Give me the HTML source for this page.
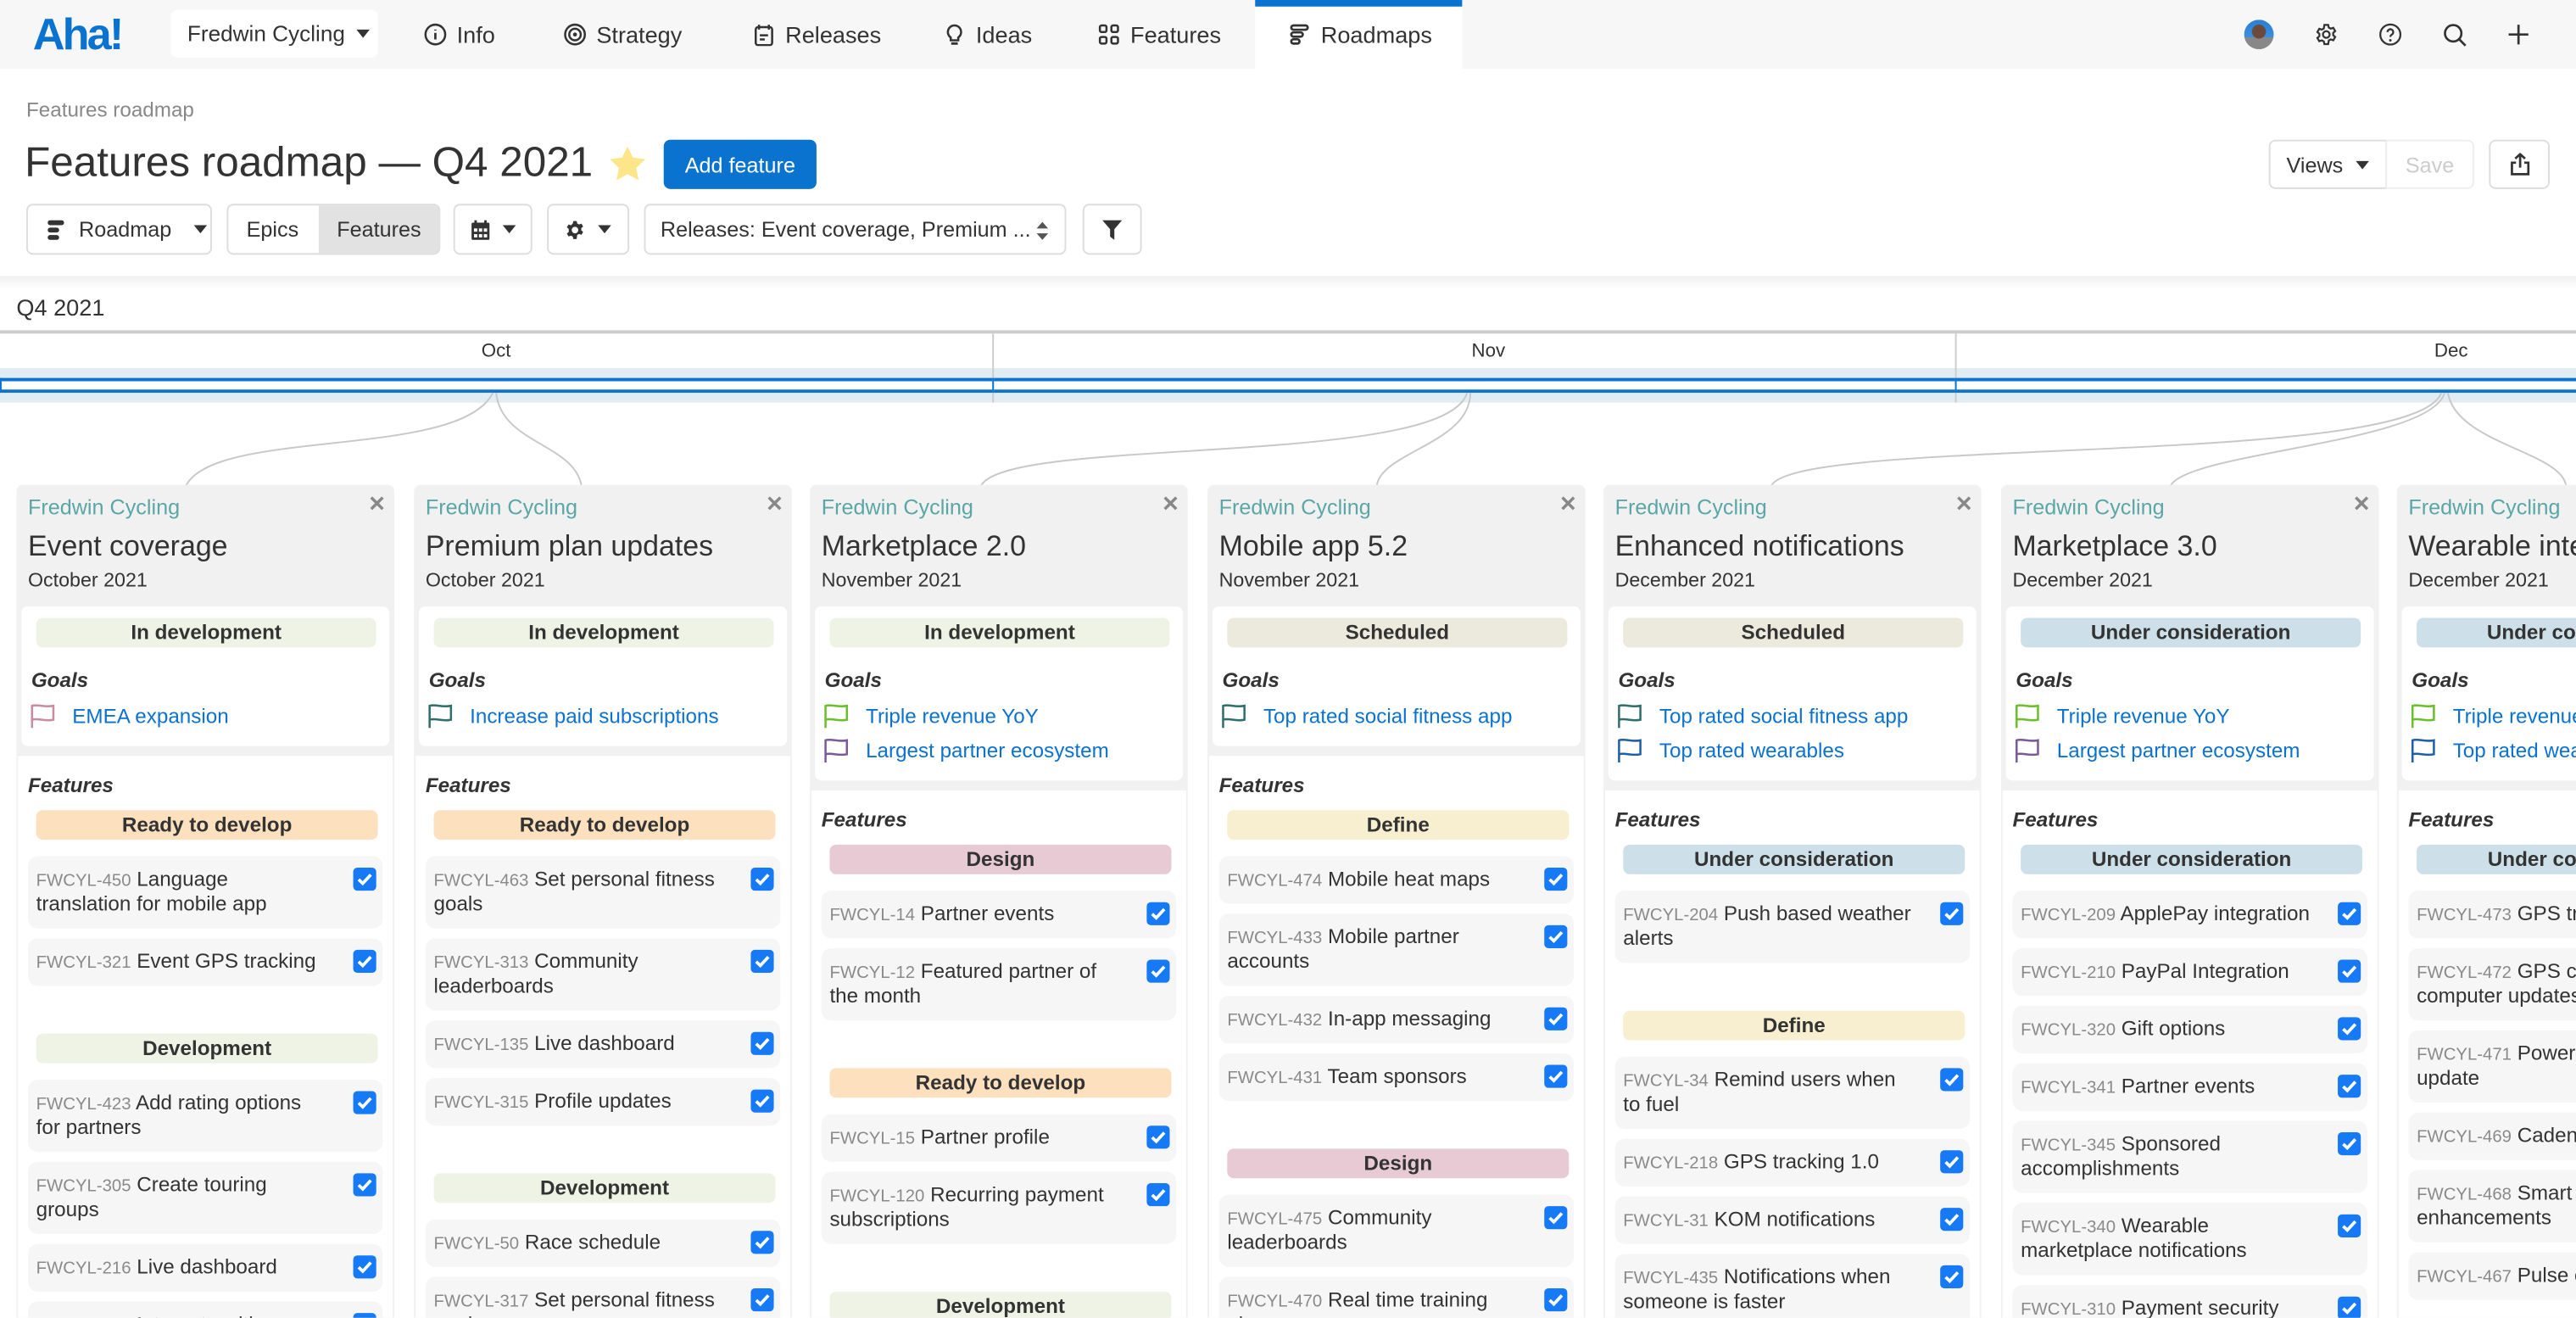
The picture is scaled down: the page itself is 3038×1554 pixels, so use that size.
<!DOCTYPE html>
<html><head><meta charset="utf-8">
<style>
*{box-sizing:border-box;margin:0;padding:0}
html,body{width:3038px;height:1554px;overflow:hidden;background:#fff}
#s{position:absolute;left:0;top:0;width:1568px;height:802px;transform:scale(1.9375);transform-origin:0 0;overflow:hidden;font-family:"Liberation Sans",Arial,sans-serif;color:#333;background:#fff}
.a{position:absolute}
.nav{left:0;top:0;width:1568px;height:42px;background:#f7f7f7}
.ni{position:absolute;top:0;height:42px;display:flex;align-items:center;font-size:14px;color:#333;gap:6px}
.ni svg{width:14px;height:14px}
.btn{position:absolute;border:1px solid #ddd;border-radius:4px;background:#fff;display:flex;align-items:center;justify-content:center;font-size:13px;color:#333;gap:8px}
.tri{width:0;height:0;border-left:4px solid transparent;border-right:4px solid transparent;border-top:5px solid #333}
.card{position:absolute;top:295px;width:230px;height:507px;background:#f1f1f1;border-radius:4px 4px 0 0;overflow:hidden}
.hd{padding:6px 0 0 7px}
.org{font-size:13px;line-height:16px;color:#5ba6a6}
.ttl{font-size:17.5px;line-height:22px;margin-top:4px;color:#333;white-space:nowrap}
.dt{font-size:12px;line-height:16px;margin-top:2px;color:#333}
.x{position:absolute;right:5px;top:4px;font-size:13px;color:#888;font-weight:bold}
.gb{margin:8px 3px 0 3px;background:#fff;border-radius:4px;padding:7px 8px 7.5px 9px}
.pill{height:18px;border-radius:4px;font-size:12.5px;font-weight:bold;line-height:18px;text-align:center;color:#333;white-space:nowrap;overflow:hidden}
.lbl{font-size:12.5px;font-weight:bold;font-style:italic;line-height:16px;color:#333}
.gb .lbl{margin-top:12px;margin-left:-3px;margin-bottom:3px}
.goal{height:21px;display:flex;align-items:center;font-size:12.5px;color:#0b72d0;white-space:nowrap;margin-left:-4px}
.goal svg{width:16px;height:15px;margin-right:10px;flex:none}
.fs{margin:6px 1px 0 1px;background:#fff;padding:10px 6px 0 6px;height:420px}
.fs>.lbl{margin-left:0}
.fs .pill{margin:0 3px 0 5px}
.fs .pill.first{margin-top:7px}
.fs .pill.next{margin-top:29px}
.it{position:relative;background:#f6f6f6;border-radius:6px;padding:7px 24px 7px 5px;font-size:12.5px;line-height:15px;color:#333;white-space:nowrap;margin-top:6px}
.pill+.it{margin-top:10px}
.id{font-size:10.5px;color:#8a8a8a;line-height:1}
.cb{position:absolute;right:4px;top:7px;width:14px;height:14px;border-radius:2.5px;background:#1679f5}
.cb svg{position:absolute;left:2px;top:2px;width:10px;height:10px}
.g1{background:#eff3e6}.rd{background:#fde1bf}.sc{background:#ece9dd}.uc{background:#cde0e9}.ds{background:#e8cad5}.df{background:#f7efcf}
</style></head><body><div id="s">

<div class="a nav"></div>
<div class="a" style="left:20px;top:4px;font-size:27px;font-weight:bold;color:#0a73cf;letter-spacing:-1.5px;line-height:34px">Aha!</div>
<div class="a" style="left:104px;top:6px;width:126px;height:29px;background:#fff;border-radius:4px;display:flex;align-items:center;padding-left:10px;gap:7px;font-size:13.5px">Fredwin Cycling <span class="tri"></span></div>

<div class="ni" style="left:258px"><svg viewBox="0 0 14 14"><circle cx="7" cy="7" r="6" fill="none" stroke="#333" stroke-width="1.3"/><path d="M7 6v4M7 4v.6" stroke="#333" stroke-width="1.4"/></svg>Info</div>
<div class="ni" style="left:343px"><svg viewBox="0 0 14 14"><circle cx="7" cy="7" r="6" fill="none" stroke="#333" stroke-width="1.3"/><circle cx="7" cy="7" r="3.5" fill="none" stroke="#333" stroke-width="1.3"/><circle cx="7" cy="7" r="1.2" fill="#333"/></svg>Strategy</div>
<div class="ni" style="left:458px"><svg viewBox="0 0 14 14"><rect x="2" y="2.5" width="10" height="11" rx="1.5" fill="none" stroke="#333" stroke-width="1.3"/><path d="M4 1v3M10 1v3M4.5 7.5h5M4.5 10h3" stroke="#333" stroke-width="1.3"/></svg>Releases</div>
<div class="ni" style="left:574px"><svg viewBox="0 0 14 14"><path d="M7 1.5a4 4 0 0 0-2.3 7.3V10.5h4.6V8.8A4 4 0 0 0 7 1.5z" fill="none" stroke="#333" stroke-width="1.3"/><path d="M5 12.5h4" stroke="#333" stroke-width="1.5"/></svg>Ideas</div>
<div class="ni" style="left:668px"><svg viewBox="0 0 14 14"><g fill="none" stroke="#333" stroke-width="1.3"><rect x="1.5" y="1.5" width="4" height="4" rx="1"/><rect x="8.5" y="1.5" width="4" height="4" rx="1"/><rect x="1.5" y="8.5" width="4" height="4" rx="1"/><rect x="8.5" y="8.5" width="4" height="4" rx="1"/></g></svg>Features</div>
<div class="a" style="left:764px;top:0;width:126px;height:42px;background:#fff;border-top:4px solid #0a73cf"></div>
<div class="ni" style="left:784px"><svg viewBox="0 0 14 14"><g fill="none" stroke="#333" stroke-width="1.4"><rect x="2" y="1.5" width="10" height="2.6" rx="1.3"/><rect x="2" y="5.7" width="7" height="2.6" rx="1.3"/><rect x="2" y="9.9" width="5" height="2.6" rx="1.3"/></g></svg>Roadmaps</div>

<div class="a" style="left:1366px;top:12px;width:18px;height:18px;border-radius:50%;background:radial-gradient(circle at 50% 40%,#6b4a3a 0 4px,transparent 4.5px),linear-gradient(#2a7fd6,#3a8fe0 60%,#888 60%)"></div>
<svg class="a" style="left:1409px;top:14px" width="14" height="14" viewBox="0 0 24 24"><path d="M12 8.5a3.5 3.5 0 1 0 0 7 3.5 3.5 0 0 0 0-7zM10 2h4l.6 2.8 2 1.1 2.7-.9 2 3.4-2.1 1.9v2.4l2.1 1.9-2 3.4-2.7-.9-2 1.1L14 22h-4l-.6-2.8-2-1.1-2.7.9-2-3.4 2.1-1.9v-2.4L2.7 9.4l2-3.4 2.7.9 2-1.1z" fill="none" stroke="#333" stroke-width="2"/></svg>
<svg class="a" style="left:1448px;top:14px" width="14" height="14" viewBox="0 0 24 24"><circle cx="12" cy="12" r="10.5" fill="none" stroke="#333" stroke-width="2"/><path d="M9 9.5a3 3 0 1 1 4.5 2.6c-1 .6-1.5 1.2-1.5 2.4" fill="none" stroke="#333" stroke-width="2"/><circle cx="12" cy="18" r="1.3" fill="#333"/></svg>
<svg class="a" style="left:1487px;top:14px" width="15" height="15" viewBox="0 0 24 24"><circle cx="10" cy="10" r="8" fill="none" stroke="#333" stroke-width="2.2"/><path d="M16 16l6 6" stroke="#333" stroke-width="2.2"/></svg>
<svg class="a" style="left:1526px;top:14px" width="14" height="14" viewBox="0 0 14 14"><path d="M7 1v12M1 7h12" stroke="#333" stroke-width="1.4"/></svg>

<div class="a" style="left:16px;top:59px;font-size:12.5px;color:#888;line-height:16px">Features roadmap</div>
<div class="a" style="left:15px;top:84px;font-size:25.5px;line-height:30px;color:#333;white-space:nowrap">Features roadmap — Q4 2021</div>
<svg class="a" style="left:370px;top:88px" width="24" height="23" viewBox="0 0 24 23"><path d="M12 1l3.3 6.9 7.5 1-5.5 5.2 1.4 7.5L12 18l-6.7 3.6 1.4-7.5L1.2 8.9l7.5-1z" fill="#fde68a"/></svg>
<div class="a" style="left:404px;top:85px;width:93px;height:30px;background:#0a73cf;border-radius:4px;color:#fff;font-size:13px;display:flex;align-items:center;justify-content:center">Add feature</div>

<div class="btn" style="left:16px;top:124px;width:113px;height:31px;justify-content:flex-start;padding-left:12px"><svg width="11" height="12" viewBox="0 0 11 12"><rect x="0" y="0" width="10" height="3" rx="1.5" fill="#333"/><rect x="0" y="4.5" width="7" height="3" rx="1.5" fill="#333"/><rect x="0" y="9" width="7" height="3" rx="1.5" fill="#333"/></svg>Roadmap<span class="tri" style="margin-left:6px"></span></div>
<div class="btn" style="left:138px;top:124px;width:130px;height:31px;justify-content:flex-start;overflow:hidden;gap:0"><span style="width:55px;padding-left:11px">Epics</span><span style="background:#e2e2e2;height:100%;flex:1;display:flex;align-items:center;padding-left:11px">Features</span></div>
<div class="btn" style="left:276px;top:124px;width:48px;height:31px"><svg width="11" height="12" viewBox="0 0 11 12"><path d="M2.5 0v3M8.5 0v3" stroke="#333" stroke-width="1.5"/><rect x="0" y="1.5" width="11" height="10.5" rx="1" fill="#333"/><g fill="#fff"><rect x="1.5" y="5" width="2" height="2"/><rect x="4.5" y="5" width="2" height="2"/><rect x="7.5" y="5" width="2" height="2"/><rect x="1.5" y="8.5" width="2" height="2"/><rect x="4.5" y="8.5" width="2" height="2"/><rect x="7.5" y="8.5" width="2" height="2"/></g></svg><span class="tri"></span></div>
<div class="btn" style="left:333px;top:124px;width:50px;height:31px"><svg width="12" height="12" viewBox="0 0 24 24"><path d="M12 8a4 4 0 1 0 0 8 4 4 0 0 0 0-8zM10 1h4l.7 3 2.2 1.2 3-1 2 3.5-2.3 2v2.6l2.3 2-2 3.5-3-1-2.2 1.2L14 23h-4l-.7-3-2.2-1.2-3 1-2-3.5 2.3-2V10.7L2.1 8.7l2-3.5 3 1L9.3 4z" fill="#333" fill-rule="evenodd"/></svg><span class="tri"></span></div>
<div class="btn" style="left:392px;top:124px;width:257px;height:31px;justify-content:flex-start;padding-left:9px">Releases: Event coverage, Premium ...<svg style="position:absolute;right:10px;top:10px" width="7" height="11" viewBox="0 0 7 11"><path d="M3.5 0L7 4H0zM3.5 11L0 7h7z" fill="#555"/></svg></div>
<div class="btn" style="left:659px;top:124px;width:36px;height:31px"><svg width="12" height="12" viewBox="0 0 12 12"><path d="M0 0h12L7.3 5.5V12L4.7 10V5.5z" fill="#333"/></svg></div>

<div class="btn" style="left:1381px;top:85px;width:72px;height:30px;border-radius:4px 0 0 4px">Views <span class="tri"></span></div>
<div class="btn" style="left:1452px;top:85px;width:54px;height:30px;border-radius:0 4px 4px 0;border-color:#eee;color:#ccc">Save</div>
<div class="btn" style="left:1515px;top:85px;width:37px;height:30px"><svg width="12" height="14" viewBox="0 0 12 14"><path d="M6 9V1M3 3.5L6 .8l3 2.7M3.5 6H1v7h10V6H8.5" fill="none" stroke="#333" stroke-width="1.4"/></svg></div>

<div class="a" style="left:0;top:168px;width:1568px;height:8px;background:linear-gradient(rgba(0,0,0,0.06),rgba(0,0,0,0))"></div>
<div class="a" style="left:10px;top:179px;font-size:14px;line-height:16px">Q4 2021</div>
<div class="a" style="left:0;top:201px;width:1568px;height:2px;background:#ccc"></div>
<div class="a" style="left:0;top:208px;width:604px;text-align:center;font-size:11.5px">Oct</div>
<div class="a" style="left:605px;top:208px;width:602px;text-align:center;font-size:11.5px">Nov</div>
<div class="a" style="left:1191px;top:208px;width:602px;text-align:center;font-size:11.5px">Dec</div>
<div class="a" style="left:0;top:224px;width:1568px;height:21px;background:#e1ecf3"></div>
<div class="a" style="left:0;top:230px;width:1568px;height:2px;background:#0a73cf"></div>
<div class="a" style="left:0;top:237px;width:1568px;height:2px;background:#0a73cf"></div>
<div class="a" style="left:0;top:232px;width:1568px;height:5px;background:#fff"></div>
<div class="a" style="left:0;top:230px;width:1px;height:9px;background:#0a73cf"></div>
<div class="a" style="left:604px;top:203px;width:1px;height:42px;background:#ccc"></div>
<div class="a" style="left:1190px;top:203px;width:1px;height:42px;background:#ccc"></div>
<div class="a" style="left:604px;top:230px;width:1px;height:9px;background:#0a73cf"></div>
<div class="a" style="left:1190px;top:230px;width:1px;height:9px;background:#0a73cf"></div>

<svg class="a" style="left:0;top:0" width="1568" height="300" viewBox="0 0 1568 300"><g fill="none" stroke="#c8c8c8" stroke-width="1">
<path d="M300 239C280 280 130 260 113 296"/><path d="M302 239C305 270 350 270 354 296"/>
<path d="M893 239C880 285 610 265 597 296"/><path d="M895 239C895 270 840 275 838 296"/>
<path d="M1486 239C1470 285 1090 265 1078 296"/><path d="M1488 239C1480 270 1330 275 1321 296"/><path d="M1490 239C1495 270 1560 275 1562 296"/>
</g></svg>

<svg width="0" height="0" style="position:absolute"><defs>
<symbol id="fl" viewBox="0 0 16 15"><path d="M1.5 15V1.5C5 .3 9 2.7 14.5 1.5V10C9 11.2 5 8.8 1.5 10" fill="none" stroke="currentColor" stroke-width="1.3"/></symbol>
<symbol id="ck" viewBox="0 0 10 10"><path d="M1.3 5.2l2.5 2.4L8.7 2.3" fill="none" stroke="#fff" stroke-width="1.9"/></symbol>
</defs></svg>

<!-- Card 1 -->
<div class="card" style="left:10px"><div class="x">✕</div>
<div class="hd"><div class="org">Fredwin Cycling</div><div class="ttl">Event coverage</div><div class="dt">October 2021</div></div>
<div class="gb"><div class="pill g1">In development</div><div class="lbl">Goals</div>
<div class="goal"><svg style="color:#c98ba0"><use href="#fl"/></svg>EMEA expansion</div></div>
<div class="fs"><div class="lbl">Features</div>
<div class="pill rd first">Ready to develop</div>
<div class="it"><span class="id">FWCYL-450</span> Language<br>translation for mobile app<span class="cb"><svg><use href="#ck"/></svg></span></div>
<div class="it"><span class="id">FWCYL-321</span> Event GPS tracking<span class="cb"><svg><use href="#ck"/></svg></span></div>
<div class="pill g1 next">Development</div>
<div class="it"><span class="id">FWCYL-423</span> Add rating options<br>for partners<span class="cb"><svg><use href="#ck"/></svg></span></div>
<div class="it"><span class="id">FWCYL-305</span> Create touring<br>groups<span class="cb"><svg><use href="#ck"/></svg></span></div>
<div class="it"><span class="id">FWCYL-216</span> Live dashboard<span class="cb"><svg><use href="#ck"/></svg></span></div>
<div class="it"><span class="id">FWCYL-301</span> Integrate with<br>Strava<span class="cb"><svg><use href="#ck"/></svg></span></div>
</div></div>

<!-- Card 2 -->
<div class="card" style="left:252px"><div class="x">✕</div>
<div class="hd"><div class="org">Fredwin Cycling</div><div class="ttl">Premium plan updates</div><div class="dt">October 2021</div></div>
<div class="gb"><div class="pill g1">In development</div><div class="lbl">Goals</div>
<div class="goal"><svg style="color:#2f6e6a"><use href="#fl"/></svg>Increase paid subscriptions</div></div>
<div class="fs"><div class="lbl">Features</div>
<div class="pill rd first">Ready to develop</div>
<div class="it"><span class="id">FWCYL-463</span> Set personal fitness<br>goals<span class="cb"><svg><use href="#ck"/></svg></span></div>
<div class="it"><span class="id">FWCYL-313</span> Community<br>leaderboards<span class="cb"><svg><use href="#ck"/></svg></span></div>
<div class="it"><span class="id">FWCYL-135</span> Live dashboard<span class="cb"><svg><use href="#ck"/></svg></span></div>
<div class="it"><span class="id">FWCYL-315</span> Profile updates<span class="cb"><svg><use href="#ck"/></svg></span></div>
<div class="pill g1 next">Development</div>
<div class="it"><span class="id">FWCYL-50</span> Race schedule<span class="cb"><svg><use href="#ck"/></svg></span></div>
<div class="it"><span class="id">FWCYL-317</span> Set personal fitness<br>goals<span class="cb"><svg><use href="#ck"/></svg></span></div>
</div></div>

<!-- Card 3 -->
<div class="card" style="left:493px"><div class="x">✕</div>
<div class="hd"><div class="org">Fredwin Cycling</div><div class="ttl">Marketplace 2.0</div><div class="dt">November 2021</div></div>
<div class="gb"><div class="pill g1">In development</div><div class="lbl">Goals</div>
<div class="goal"><svg style="color:#6bbf2a"><use href="#fl"/></svg>Triple revenue YoY</div>
<div class="goal"><svg style="color:#7a5a9a"><use href="#fl"/></svg>Largest partner ecosystem</div></div>
<div class="fs"><div class="lbl">Features</div>
<div class="pill ds first">Design</div>
<div class="it"><span class="id">FWCYL-14</span> Partner events<span class="cb"><svg><use href="#ck"/></svg></span></div>
<div class="it"><span class="id">FWCYL-12</span> Featured partner of<br>the month<span class="cb"><svg><use href="#ck"/></svg></span></div>
<div class="pill rd next">Ready to develop</div>
<div class="it"><span class="id">FWCYL-15</span> Partner profile<span class="cb"><svg><use href="#ck"/></svg></span></div>
<div class="it"><span class="id">FWCYL-120</span> Recurring payment<br>subscriptions<span class="cb"><svg><use href="#ck"/></svg></span></div>
<div class="pill g1 next">Development</div>
</div></div>

<!-- Card 4 -->
<div class="card" style="left:735px"><div class="x">✕</div>
<div class="hd"><div class="org">Fredwin Cycling</div><div class="ttl">Mobile app 5.2</div><div class="dt">November 2021</div></div>
<div class="gb"><div class="pill sc">Scheduled</div><div class="lbl">Goals</div>
<div class="goal"><svg style="color:#2f6e6a"><use href="#fl"/></svg>Top rated social fitness app</div></div>
<div class="fs"><div class="lbl">Features</div>
<div class="pill df first">Define</div>
<div class="it"><span class="id">FWCYL-474</span> Mobile heat maps<span class="cb"><svg><use href="#ck"/></svg></span></div>
<div class="it"><span class="id">FWCYL-433</span> Mobile partner<br>accounts<span class="cb"><svg><use href="#ck"/></svg></span></div>
<div class="it"><span class="id">FWCYL-432</span> In-app messaging<span class="cb"><svg><use href="#ck"/></svg></span></div>
<div class="it"><span class="id">FWCYL-431</span> Team sponsors<span class="cb"><svg><use href="#ck"/></svg></span></div>
<div class="pill ds next">Design</div>
<div class="it"><span class="id">FWCYL-475</span> Community<br>leaderboards<span class="cb"><svg><use href="#ck"/></svg></span></div>
<div class="it"><span class="id">FWCYL-470</span> Real time training<br>plans<span class="cb"><svg><use href="#ck"/></svg></span></div>
</div></div>

<!-- Card 5 -->
<div class="card" style="left:976px"><div class="x">✕</div>
<div class="hd"><div class="org">Fredwin Cycling</div><div class="ttl">Enhanced notifications</div><div class="dt">December 2021</div></div>
<div class="gb"><div class="pill sc">Scheduled</div><div class="lbl">Goals</div>
<div class="goal"><svg style="color:#2f6e6a"><use href="#fl"/></svg>Top rated social fitness app</div>
<div class="goal"><svg style="color:#1f5fa8"><use href="#fl"/></svg>Top rated wearables</div></div>
<div class="fs"><div class="lbl">Features</div>
<div class="pill uc first">Under consideration</div>
<div class="it"><span class="id">FWCYL-204</span> Push based weather<br>alerts<span class="cb"><svg><use href="#ck"/></svg></span></div>
<div class="pill df next">Define</div>
<div class="it"><span class="id">FWCYL-34</span> Remind users when<br>to fuel<span class="cb"><svg><use href="#ck"/></svg></span></div>
<div class="it"><span class="id">FWCYL-218</span> GPS tracking 1.0<span class="cb"><svg><use href="#ck"/></svg></span></div>
<div class="it"><span class="id">FWCYL-31</span> KOM notifications<span class="cb"><svg><use href="#ck"/></svg></span></div>
<div class="it"><span class="id">FWCYL-435</span> Notifications when<br>someone is faster<span class="cb"><svg><use href="#ck"/></svg></span></div>
</div></div>

<!-- Card 6 -->
<div class="card" style="left:1218px"><div class="x">✕</div>
<div class="hd"><div class="org">Fredwin Cycling</div><div class="ttl">Marketplace 3.0</div><div class="dt">December 2021</div></div>
<div class="gb"><div class="pill uc">Under consideration</div><div class="lbl">Goals</div>
<div class="goal"><svg style="color:#6bbf2a"><use href="#fl"/></svg>Triple revenue YoY</div>
<div class="goal"><svg style="color:#7a5a9a"><use href="#fl"/></svg>Largest partner ecosystem</div></div>
<div class="fs"><div class="lbl">Features</div>
<div class="pill uc first">Under consideration</div>
<div class="it"><span class="id">FWCYL-209</span> ApplePay integration<span class="cb"><svg><use href="#ck"/></svg></span></div>
<div class="it"><span class="id">FWCYL-210</span> PayPal Integration<span class="cb"><svg><use href="#ck"/></svg></span></div>
<div class="it"><span class="id">FWCYL-320</span> Gift options<span class="cb"><svg><use href="#ck"/></svg></span></div>
<div class="it"><span class="id">FWCYL-341</span> Partner events<span class="cb"><svg><use href="#ck"/></svg></span></div>
<div class="it"><span class="id">FWCYL-345</span> Sponsored<br>accomplishments<span class="cb"><svg><use href="#ck"/></svg></span></div>
<div class="it"><span class="id">FWCYL-340</span> Wearable<br>marketplace notifications<span class="cb"><svg><use href="#ck"/></svg></span></div>
<div class="it"><span class="id">FWCYL-310</span> Payment security<span class="cb"><svg><use href="#ck"/></svg></span></div>
</div></div>

<!-- Card 7 -->
<div class="card" style="left:1459px"><div class="x">✕</div>
<div class="hd"><div class="org">Fredwin Cycling</div><div class="ttl">Wearable integrations</div><div class="dt">December 2021</div></div>
<div class="gb"><div class="pill uc">Under consideration</div><div class="lbl">Goals</div>
<div class="goal"><svg style="color:#6bbf2a"><use href="#fl"/></svg>Triple revenue YoY</div>
<div class="goal"><svg style="color:#1f5fa8"><use href="#fl"/></svg>Top rated wearables</div></div>
<div class="fs"><div class="lbl">Features</div>
<div class="pill uc first">Under consideration</div>
<div class="it"><span class="id">FWCYL-473</span> GPS tracking<span class="cb"><svg><use href="#ck"/></svg></span></div>
<div class="it"><span class="id">FWCYL-472</span> GPS cycling<br>computer updates<span class="cb"><svg><use href="#ck"/></svg></span></div>
<div class="it"><span class="id">FWCYL-471</span> Power meter<br>update<span class="cb"><svg><use href="#ck"/></svg></span></div>
<div class="it"><span class="id">FWCYL-469</span> Cadence sensor<span class="cb"><svg><use href="#ck"/></svg></span></div>
<div class="it"><span class="id">FWCYL-468</span> Smart trainer<br>enhancements<span class="cb"><svg><use href="#ck"/></svg></span></div>
<div class="it"><span class="id">FWCYL-467</span> Pulse oximeter<span class="cb"><svg><use href="#ck"/></svg></span></div>
</div></div>

</div></body></html>
